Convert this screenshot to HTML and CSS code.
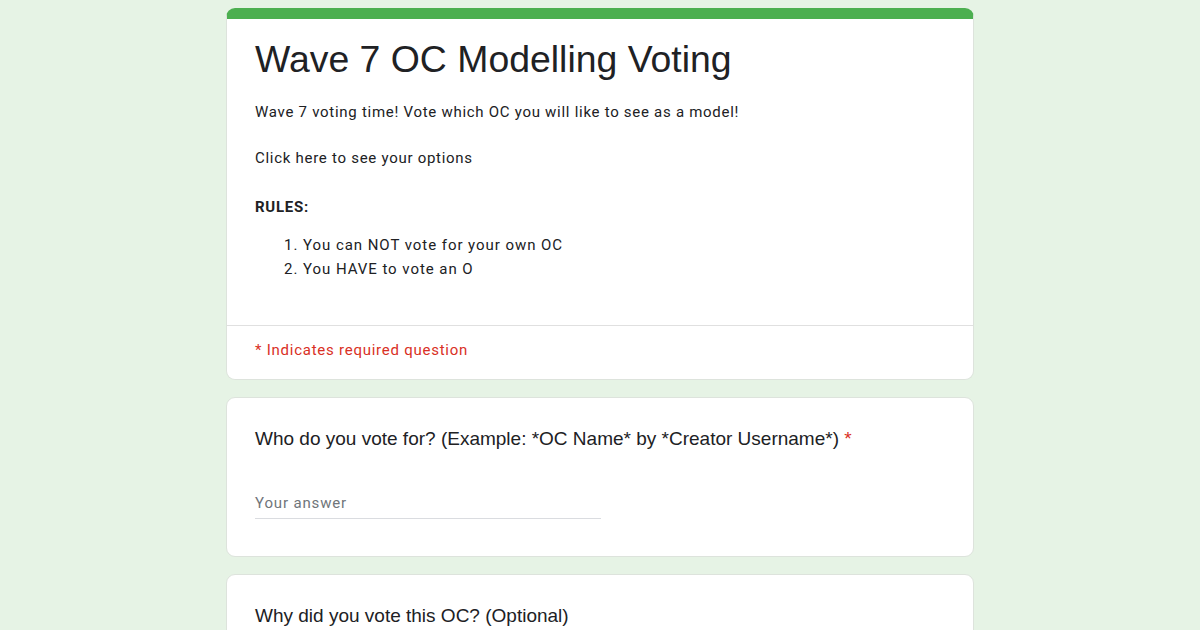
FILE: index.html
```html
<!DOCTYPE html>
<html>
<head>
<meta charset="utf-8">
<link rel="stylesheet" href="styles.css">
</head>
<body>
<div class="page">
  <div class="card header-card">
    <div class="header-main">
      <h1 class="title">Wave 7 OC Modelling Voting</h1>
      <div class="desc">
        <p>Wave 7 voting time! Vote which OC you will like to see as a model!</p>
        <p class="blank">&nbsp;</p>
        <p>Click here to see your options</p>
        <p class="blank">&nbsp;</p>
        <p class="bold">RULES:</p>
        <ol class="rules">
          <li>You can NOT vote for your own OC</li>
          <li>You HAVE to vote an O</li>
        </ol>
      </div>
    </div>
    <div class="required-note">* Indicates required question</div>
  </div>

  <div class="card question-card">
    <div class="question">Who do you vote for? (Example: *OC Name* by *Creator Username*) <span class="star">*</span></div>
    <div class="answer">Your answer</div>
  </div>

  <div class="card question-card">
    <div class="question">Why did you vote this OC? (Optional)</div>
  </div>
</div>
</body>
</html>
```

FILE: styles.css
```css
html, body {
  margin: 0;
  padding: 0;
  background: #e6f3e5;
  overflow: hidden;
}
body {
  height: 630px;
}
.page {
  width: 748px;
  margin: 0 auto;
  padding-top: 8px;
  display: flex;
  flex-direction: column;
  gap: 17px;
}
.card {
  background: #ffffff;
  border: 1px solid #dde3dc;
  border-radius: 9px;
  box-sizing: border-box;
}
.header-card {
  border-top: 11px solid #4caf50;
}
.header-main {
  padding: 18px 29px 44px 28px;
  border-bottom: 1px solid #e0e0e0;
}
.title {
  margin: 0;
  font-family: "Liberation Sans", Arial, sans-serif;
  font-weight: 400;
  font-size: 37.4px;
  line-height: 44px;
  color: #202124;
}
.desc {
  margin-top: 20px;
  font-family: Roboto, "Noto Sans", sans-serif;
  font-size: 15px;
  line-height: 23px;
  letter-spacing: 0.72px;
  color: #202124;
}
.desc p {
  margin: 0;
}
.desc .bold {
  font-weight: 700;
  margin-top: 3px;
}
.rules {
  margin: 14px 0 0 0;
  padding-left: 48px;
  line-height: 24px;
  letter-spacing: 0.95px;
}
.required-note {
  padding: 12px 29px 17px 28px;
  font-family: Roboto, "Noto Sans", sans-serif;
  font-size: 15px;
  line-height: 24px;
  letter-spacing: 0.75px;
  color: #d93025;
}
.question-card {
  padding: 28px 29px 37px 28px;
}
.question {
  font-family: "Liberation Sans", Arial, sans-serif;
  font-size: 19px;
  line-height: 26px;
  color: #202124;
}
.star {
  color: #d93025;
}
.answer {
  margin-top: 40px;
  width: 346px;
  padding-bottom: 4px;
  border-bottom: 1px solid #dadce0;
  font-family: Roboto, "Noto Sans", sans-serif;
  font-size: 15px;
  line-height: 22px;
  letter-spacing: 0.85px;
  color: #70757a;
}
```
